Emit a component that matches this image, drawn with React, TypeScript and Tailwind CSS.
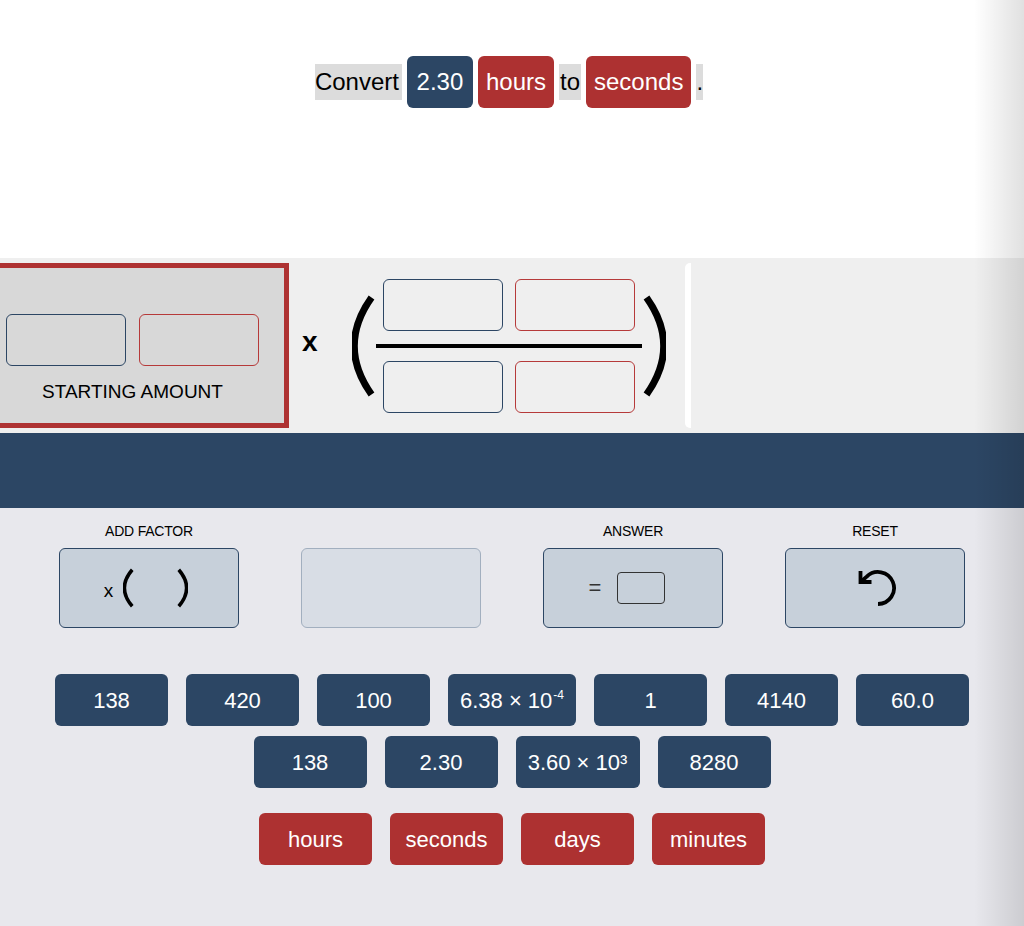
import React from "react";

const BLUE = "bg-[#2c4664]";

const numbers: { id: number; label: React.ReactNode; minW?: string }[] = [
  { id: 1, label: "138" },
  { id: 2, label: "420" },
  { id: 3, label: "100" },
  {
    id: 4,
    label: (
      <>
        6.38 × 10<sup className="relative -top-[9px] ml-[1px] align-baseline text-[12px]">-4</sup>
      </>
    ),
    minW: "min-w-[128px]",
  },
  { id: 5, label: "1" },
  { id: 6, label: "4140" },
  { id: 7, label: "60.0" },
  { id: 8, label: "138" },
  { id: 9, label: "2.30" },
  { id: 10, label: "3.60 × 10³", minW: "min-w-[124px]" },
  { id: 11, label: "8280" },
];

const units = ["hours", "seconds", "days", "minutes"];

const Paren: React.FC<{ right?: boolean; className?: string; w: number; h: number; sw: number }> = ({
  right,
  className,
  w,
  h,
  sw,
}) => {
  const pad = sw / 2 + 1;
  const d = right
    ? `M${pad} ${pad} Q${w * 2 - pad * 2} ${h / 2} ${pad} ${h - pad}`
    : `M${w - pad} ${pad} Q${-w + pad * 2} ${h / 2} ${w - pad} ${h - pad}`;
  return (
    <svg width={w} height={h} viewBox={`0 0 ${w} ${h}`} className={className}>
      <path d={d} fill="none" stroke="#000" strokeWidth={sw} strokeLinecap="butt" />
    </svg>
  );
};

const SlotBox: React.FC<{ red?: boolean }> = ({ red }) => (
  <div
    className={`h-[52px] w-[120px] rounded-[6px] border-[1.5px] ${
      red ? "border-[#b63a3a]" : "border-[#2c4664]"
    }`}
  />
);

const Chip: React.FC<{ red?: boolean; minW?: string; children: React.ReactNode }> = ({
  red,
  minW,
  children,
}) => (
  <div
    className={`flex h-[52px] items-center justify-center rounded-[6px] px-2 text-[22px] text-white ${
      red ? "bg-[#ad3131]" : BLUE
    } ${minW ?? "min-w-[113px]"}`}
  >
    <span className="whitespace-nowrap">{children}</span>
  </div>
);

const ControlBox: React.FC<{ label?: string; disabled?: boolean; children?: React.ReactNode }> = ({
  label,
  disabled,
  children,
}) => (
  <div className="flex w-[180px] flex-col items-center">
    <div className="h-[17px] text-[14px] leading-[17px] tracking-[-0.2px] text-black">{label}</div>
    <div
      className={`mt-[8px] flex h-[80px] w-[180px] items-center justify-center rounded-[6px] border-[1.5px] ${
        disabled ? "border-[#a2afbf] bg-[#d8dde5]" : "border-[#2c4664] bg-[#c7d0da]"
      }`}
    >
      {children}
    </div>
  </div>
);

export default function App() {
  return (
    <div
      className="relative flex min-h-screen flex-col overflow-hidden bg-white"
      style={{ fontFamily: '"Liberation Sans", Arial, sans-serif' }}
    >
      {/* prompt */}
      <div className="flex h-[258px] items-start justify-center pt-[56px]">
        <div className="mr-[6px] flex items-center gap-[5px] text-[24px] text-black">
          <span className="bg-[#dcdcdc] pr-[3px] leading-[36px]">Convert</span>
          <span className={`flex h-[52px] min-w-[66px] items-center justify-center rounded-[6px] px-2 text-white ${BLUE}`}>
            2.30
          </span>
          <span className="flex h-[52px] items-center rounded-[6px] bg-[#ad3131] px-[8px] text-white">hours</span>
          <span className="bg-[#dcdcdc] px-[1px] leading-[36px]">to</span>
          <span className="flex h-[52px] items-center rounded-[6px] bg-[#ad3131] px-[8px] text-white">seconds</span>
          <span className="bg-[#dcdcdc] leading-[36px]">.</span>
        </div>
      </div>

      {/* equation */}
      <div className="flex h-[175px] items-center bg-[#efefef]">
        <div className="flex h-[165px] w-[289px] flex-col border-y-[5px] border-r-[5px] border-l-0 border-[#ae3232] bg-[#d8d8d8]">
          <div className="ml-[6px] w-[253px] pt-[46px]">
            <div className="flex justify-between">
              <SlotBox />
              <SlotBox red />
            </div>
            <div className="mt-[15px] text-center text-[19px] leading-[22px] text-black">
              STARTING AMOUNT
            </div>
          </div>
        </div>

        <div className="mb-[8px] ml-[13px] text-[28px] font-bold leading-none text-black">x</div>

        <div className="ml-[34px] flex items-center">
          <Paren w={24} h={106} sw={7} />
          <div className="flex w-[266px] flex-col">
            <div className="flex justify-between px-[7px]">
              <SlotBox />
              <SlotBox red />
            </div>
            <div className="my-[13px] h-[4px] bg-black" />
            <div className="flex justify-between px-[7px]">
              <SlotBox />
              <SlotBox red />
            </div>
          </div>
          <Paren right w={24} h={106} sw={7} />
        </div>

        <div className="ml-[19px] h-[165px] w-[6px] rounded-l-[5px] bg-white" />
      </div>

      <div className={`h-[75px] ${BLUE}`} />

      {/* controls */}
      <div className="flex flex-1 flex-col items-center bg-[#e8e8ed] pt-[15px]">
        <div className="flex gap-[62px]">
          <ControlBox label="ADD FACTOR">
            <div className="mr-[6px] flex items-center">
              <span className="mr-[10px] mt-[4px] text-[19px] leading-none text-black">x</span>
              <Paren w={12} h={42} sw={3.5} />
              <div className="w-[41px]" />
              <Paren right w={12} h={42} sw={3.5} />
            </div>
          </ControlBox>
          <ControlBox disabled />
          <ControlBox label="ANSWER">
            <div className="mr-[12px] flex items-center">
              <span className="mr-[16px] text-[22px] leading-none text-[#333]">=</span>
              <div className="h-[32px] w-[48px] rounded-[4px] border-[1.5px] border-[#333]" />
            </div>
          </ControlBox>
          <ControlBox label="RESET">
            <svg width="40" height="40" viewBox="0 0 40 40" className="ml-[3px]">
              <path
                d="M3.5 14 L9.7 8.7 A16 16 0 1 1 21 36"
                fill="none"
                stroke="#000"
                strokeWidth="3.8"
              />
              <path d="M3.5 3 V14 H14.5" fill="none" stroke="#000" strokeWidth="3.8" />
            </svg>
          </ControlBox>
        </div>

        <div className="mt-[46px] flex w-[940px] flex-wrap justify-center gap-x-[18px] gap-y-[10px]">
          {numbers.map((n) => (
            <Chip key={n.id} minW={n.minW}>
              {n.label}
            </Chip>
          ))}
        </div>

        <div className="mt-[25px] flex justify-center gap-[18px]">
          {units.map((u) => (
            <Chip key={u} red>
              {u}
            </Chip>
          ))}
        </div>
      </div>

      <div className="pointer-events-none absolute right-0 top-0 h-full w-[50px] bg-gradient-to-r from-transparent to-black/[0.12]" />
    </div>
  );
}
